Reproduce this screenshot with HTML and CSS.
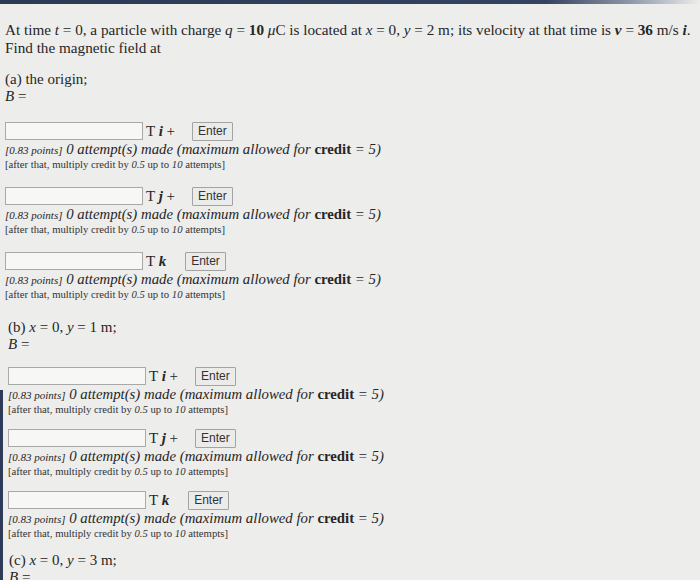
FILE: index.html
```html
<!DOCTYPE html>
<html>
<head>
<meta charset="utf-8">
<title>Magnetic field of a moving charge</title>
<link rel="stylesheet" href="styles.css">
</head>
<body>
<div class="topbar"></div>
<main class="page">
  <p class="intro">At time <i>t</i> = 0, a particle with charge <i>q</i> = <b>10</b> <i>μ</i>C is located at <i>x</i> = 0, <i>y</i> = 2 m; its velocity at that time is <b><i>v</i></b> = <b>36</b> m/s <b><i>i</i></b>.<br>Find the magnetic field at</p>

  <section class="part part-a">
    <div class="line">(a) the origin;</div>
    <div class="line"><i>B</i> =</div>

    <div class="answer">
      <div class="row"><input class="box" type="text"><span class="unit">T <b><i>i</i></b> +</span><button class="btn">Enter</button></div>
      <div class="points"><span class="pts">[0.83 points]</span> 0 attempt(s) made (maximum allowed for <b class="cr">credit</b> = 5)</div>
      <div class="after">[after that, multiply credit by <i>0.5</i> up to <i>10</i> attempts]</div>
    </div>

    <div class="answer">
      <div class="row"><input class="box" type="text"><span class="unit">T <b><i>j</i></b> +</span><button class="btn">Enter</button></div>
      <div class="points"><span class="pts">[0.83 points]</span> 0 attempt(s) made (maximum allowed for <b class="cr">credit</b> = 5)</div>
      <div class="after">[after that, multiply credit by <i>0.5</i> up to <i>10</i> attempts]</div>
    </div>

    <div class="answer">
      <div class="row"><input class="box" type="text"><span class="unit">T <b><i>k</i></b></span><button class="btn btn-k">Enter</button></div>
      <div class="points"><span class="pts">[0.83 points]</span> 0 attempt(s) made (maximum allowed for <b class="cr">credit</b> = 5)</div>
      <div class="after">[after that, multiply credit by <i>0.5</i> up to <i>10</i> attempts]</div>
    </div>
  </section>

  <section class="part part-b">
    <div class="line">(b) <i>x</i> = 0, <i>y</i> = 1 m;</div>
    <div class="line"><i>B</i> =</div>

    <div class="answer">
      <div class="row"><input class="box" type="text"><span class="unit">T <b><i>i</i></b> +</span><button class="btn">Enter</button></div>
      <div class="points"><span class="pts">[0.83 points]</span> 0 attempt(s) made (maximum allowed for <b class="cr">credit</b> = 5)</div>
      <div class="after">[after that, multiply credit by <i>0.5</i> up to <i>10</i> attempts]</div>
    </div>

    <div class="answer">
      <div class="row"><input class="box" type="text"><span class="unit">T <b><i>j</i></b> +</span><button class="btn">Enter</button></div>
      <div class="points"><span class="pts">[0.83 points]</span> 0 attempt(s) made (maximum allowed for <b class="cr">credit</b> = 5)</div>
      <div class="after">[after that, multiply credit by <i>0.5</i> up to <i>10</i> attempts]</div>
    </div>

    <div class="answer">
      <div class="row"><input class="box" type="text"><span class="unit">T <b><i>k</i></b></span><button class="btn btn-k">Enter</button></div>
      <div class="points"><span class="pts">[0.83 points]</span> 0 attempt(s) made (maximum allowed for <b class="cr">credit</b> = 5)</div>
      <div class="after">[after that, multiply credit by <i>0.5</i> up to <i>10</i> attempts]</div>
    </div>
  </section>

  <section class="part part-c">
    <div class="line">(c) <i>x</i> = 0, <i>y</i> = 3 m;</div>
    <div class="line"><i>B</i> =</div>
  </section>
</main>
</body>
</html>
```

FILE: styles.css
```css
html {
  background:
    linear-gradient(#2e3b58, #2e3b58) left 390px / 3px 200px no-repeat,
    #ededec;
}

body {
  margin: 0;
  font-family: "Liberation Serif", "Times New Roman", serif;
  font-size: 15px;
  color: #262626;
}

.topbar {
  height: 4px;
  background: linear-gradient(to right, #2b3955 0%, #34435f 78%, #8d97a8 90%, #ededec 100%);
}

.page {
  padding: 17px 6px 0 5px;
}

.intro {
  margin: 0;
  line-height: 18px;
  font-size: 15.2px;
}

.part {
  margin-top: 14px;
}

.part-b {
  margin-top: 19px;
  padding-left: 3px;
}

.part-c {
  margin-top: 13px;
  padding-left: 4px;
}

.line {
  line-height: 17px;
}

.answer {
  margin-top: 16px;
}

.part-b .answer {
  margin-top: 13px;
}

.row {
  display: flex;
  align-items: center;
  height: 20px;
}

.box {
  box-sizing: border-box;
  width: 138px;
  height: 18px;
  margin: 0;
  padding: 0 3px;
  border: 1px solid #a9a9a9;
  background: #f7f7f6;
  font: inherit;
}

.unit {
  margin-left: 3px;
  font-size: 15px;
  line-height: 18px;
}

.btn {
  box-sizing: border-box;
  margin-left: 17px;
  height: 19px;
  padding: 0 5px;
  border: 1px solid #a3a3a3;
  border-radius: 1px;
  background: #ebebea;
  color: #333;
  font-family: "Liberation Sans", Arial, sans-serif;
  font-size: 12px;
  line-height: 17px;
}

.btn-k {
  margin-left: 19px;
}

.points {
  font-style: italic;
  font-size: 14.8px;
  line-height: 16px;
}

.pts {
  font-size: 11px;
}

.cr {
  font-style: normal;
}

.after {
  font-size: 10.7px;
  line-height: 12px;
  color: #333;
}
```
